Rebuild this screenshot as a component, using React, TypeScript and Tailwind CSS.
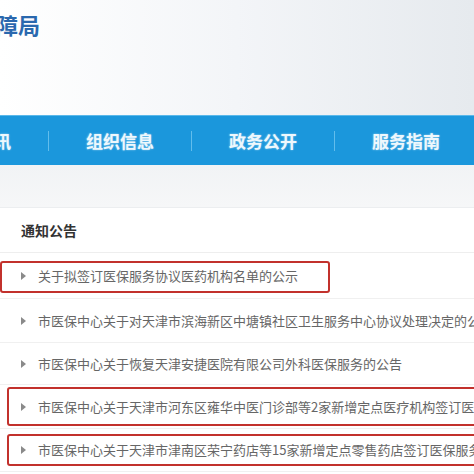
import React from 'react';

const font = { fontFamily: '"Noto Sans CJK SC", "Noto Sans", sans-serif' };

const navItems = ['新闻资讯', '组织信息', '政务公开', '服务指南', '办事大厅'];

type Notice = { title: string; h: string; box?: string };

const notices: Notice[] = [
  { title: '关于拟签订医保服务协议医药机构名单的公示', h: 'h-[46px]', box: 'left-0 top-[8px] w-[330px] h-[32px]' },
  { title: '市医保中心关于对天津市滨海新区中塘镇社区卫生服务中心协议处理决定的公告', h: 'h-[44px]' },
  { title: '市医保中心关于恢复天津安捷医院有限公司外科医保服务的公告', h: 'h-[42px]' },
  { title: '市医保中心关于天津市河东区雍华中医门诊部等2家新增定点医疗机构签订医保服务协议的公告', h: 'h-[44px]', box: 'left-[7px] top-[2px] w-[480px] h-[39px]' },
  { title: '市医保中心关于天津市津南区荣宁药店等15家新增定点零售药店签订医保服务协议的公告', h: 'h-[43px]', box: 'left-[7px] top-[5px] w-[480px] h-[32px]' },
];

export default function App(): React.ReactElement {
  return (
    <div className="w-[474px] h-[474px] overflow-hidden bg-white" style={font}>
      {/* Banner */}
      <div className="h-[115px] bg-gradient-to-r from-white via-[#f3f5f8] to-[#e6eaee] pt-[11px] overflow-hidden">
        <div className="ml-[-4px] text-[22px] font-bold leading-[26px] text-[#2a68ae]">障局</div>
      </div>

      {/* Nav bar */}
      <div className="h-[50px] bg-[#1b97dc] border-t border-[#5ab8ea] flex items-center overflow-hidden">
        <div className="flex items-center ml-[-94px] shrink-0">
          {navItems.map((item, i) => (
            <React.Fragment key={item}>
              {i > 0 && <div className="w-px h-[20px] bg-[#62bdec]" />}
              <div className="w-[142px] text-center text-[17px] font-bold text-[#eef8fd] [text-shadow:0_0_2px_rgba(255,255,255,0.6)]">
                {item}
              </div>
            </React.Fragment>
          ))}
        </div>
      </div>

      {/* Gray band */}
      <div className="h-[43px] bg-gradient-to-b from-[#f1f3f5] to-[#f6f7f8] border-b border-[#eceef0]" />

      {/* Notice panel */}
      <div className="bg-white">
        <div className="h-[45px] flex items-center pl-[21px] border-b border-[#eeeeee]">
          <span className="text-[14px] font-bold text-[#333333]">通知公告</span>
        </div>
        {notices.map((n) => (
          <div key={n.title} className={`relative ${n.h} flex items-center border-b border-[#f0f0f0]`}>
            <span className="ml-[21px] w-0 h-0 border-y-[4px] border-y-transparent border-l-[5px] border-l-[#8a8a8a]" />
            <span className="ml-[12px] text-[13px] text-[#666666] whitespace-nowrap">{n.title}</span>
            {n.box && (
              <div className={`absolute ${n.box} border-2 border-[#c2312c] rounded-[3px]`} />
            )}
          </div>
        ))}
      </div>
    </div>
  );
}
